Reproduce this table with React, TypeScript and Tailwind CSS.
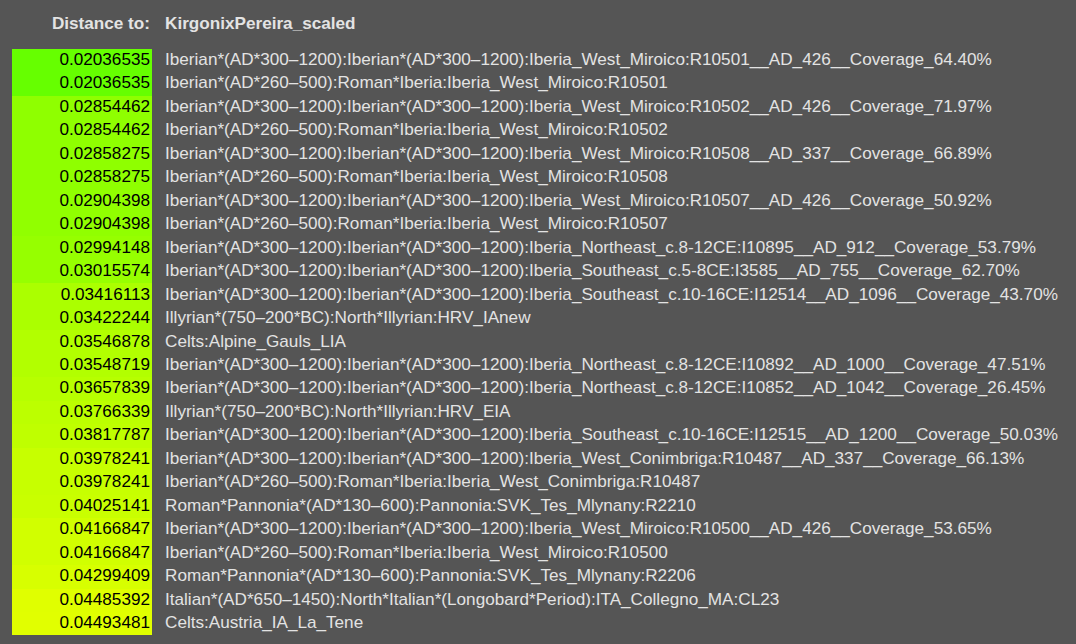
import React from 'react';

type Row = { d: number; label: string };

const rows: Row[] = [
  { d: 0.02036535, label: 'Iberian*(AD*300–1200):Iberian*(AD*300–1200):Iberia_West_Miroico:R10501__AD_426__Coverage_64.40%' },
  { d: 0.02036535, label: 'Iberian*(AD*260–500):Roman*Iberia:Iberia_West_Miroico:R10501' },
  { d: 0.02854462, label: 'Iberian*(AD*300–1200):Iberian*(AD*300–1200):Iberia_West_Miroico:R10502__AD_426__Coverage_71.97%' },
  { d: 0.02854462, label: 'Iberian*(AD*260–500):Roman*Iberia:Iberia_West_Miroico:R10502' },
  { d: 0.02858275, label: 'Iberian*(AD*300–1200):Iberian*(AD*300–1200):Iberia_West_Miroico:R10508__AD_337__Coverage_66.89%' },
  { d: 0.02858275, label: 'Iberian*(AD*260–500):Roman*Iberia:Iberia_West_Miroico:R10508' },
  { d: 0.02904398, label: 'Iberian*(AD*300–1200):Iberian*(AD*300–1200):Iberia_West_Miroico:R10507__AD_426__Coverage_50.92%' },
  { d: 0.02904398, label: 'Iberian*(AD*260–500):Roman*Iberia:Iberia_West_Miroico:R10507' },
  { d: 0.02994148, label: 'Iberian*(AD*300–1200):Iberian*(AD*300–1200):Iberia_Northeast_c.8-12CE:I10895__AD_912__Coverage_53.79%' },
  { d: 0.03015574, label: 'Iberian*(AD*300–1200):Iberian*(AD*300–1200):Iberia_Southeast_c.5-8CE:I3585__AD_755__Coverage_62.70%' },
  { d: 0.03416113, label: 'Iberian*(AD*300–1200):Iberian*(AD*300–1200):Iberia_Southeast_c.10-16CE:I12514__AD_1096__Coverage_43.70%' },
  { d: 0.03422244, label: 'Illyrian*(750–200*BC):North*Illyrian:HRV_IAnew' },
  { d: 0.03546878, label: 'Celts:Alpine_Gauls_LIA' },
  { d: 0.03548719, label: 'Iberian*(AD*300–1200):Iberian*(AD*300–1200):Iberia_Northeast_c.8-12CE:I10892__AD_1000__Coverage_47.51%' },
  { d: 0.03657839, label: 'Iberian*(AD*300–1200):Iberian*(AD*300–1200):Iberia_Northeast_c.8-12CE:I10852__AD_1042__Coverage_26.45%' },
  { d: 0.03766339, label: 'Illyrian*(750–200*BC):North*Illyrian:HRV_EIA' },
  { d: 0.03817787, label: 'Iberian*(AD*300–1200):Iberian*(AD*300–1200):Iberia_Southeast_c.10-16CE:I12515__AD_1200__Coverage_50.03%' },
  { d: 0.03978241, label: 'Iberian*(AD*300–1200):Iberian*(AD*300–1200):Iberia_West_Conimbriga:R10487__AD_337__Coverage_66.13%' },
  { d: 0.03978241, label: 'Iberian*(AD*260–500):Roman*Iberia:Iberia_West_Conimbriga:R10487' },
  { d: 0.04025141, label: 'Roman*Pannonia*(AD*130–600):Pannonia:SVK_Tes_Mlynany:R2210' },
  { d: 0.04166847, label: 'Iberian*(AD*300–1200):Iberian*(AD*300–1200):Iberia_West_Miroico:R10500__AD_426__Coverage_53.65%' },
  { d: 0.04166847, label: 'Iberian*(AD*260–500):Roman*Iberia:Iberia_West_Miroico:R10500' },
  { d: 0.04299409, label: 'Roman*Pannonia*(AD*130–600):Pannonia:SVK_Tes_Mlynany:R2206' },
  { d: 0.04485392, label: 'Italian*(AD*650–1450):North*Italian*(Longobard*Period):ITA_Collegno_MA:CL23' },
  { d: 0.04493481, label: 'Celts:Austria_IA_La_Tene' },
];

// red channel grows with distance, green stays full
const cellColor = (d: number) => {
  const r = Math.min(255, Math.round(102 + (d - 0.02036535) * 5000));
  return `rgb(${r}, 255, 0)`;
};

const App: React.FC = () => {
  return (
    <div className="w-full h-[644px] bg-[#555555] overflow-hidden pl-[12px] pt-[11px] font-['Liberation_Sans',Arial,sans-serif] text-[17.15px] text-[#e3e3e3]">
      <table className="border-collapse">
        <thead>
          <tr className="h-[23px]">
            <th className="w-[140px] pr-[2px] text-right font-bold align-middle">Distance to:</th>
            <th className="pl-[13px] text-left font-bold align-middle">KirgonixPereira_scaled</th>
          </tr>
          <tr className="h-[12px]">
            <td colSpan={2}></td>
          </tr>
        </thead>
        <tbody>
          {rows.map((row, i) => (
            <tr key={i} className="h-[23.48px]">
              <td
                className="w-[140px] pr-[2px] pb-[2px] text-right text-black align-middle leading-none"
                style={{ backgroundColor: cellColor(row.d) }}
              >
                {row.d.toFixed(8)}
              </td>
              <td className="pl-[13px] pb-[2px] whitespace-nowrap align-middle leading-none">{row.label}</td>
            </tr>
          ))}
        </tbody>
      </table>
    </div>
  );
};

export default App;
